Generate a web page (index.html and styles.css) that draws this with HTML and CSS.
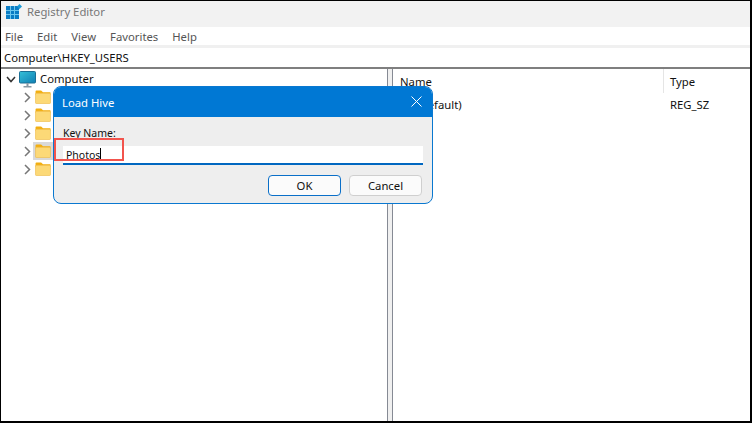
FILE: index.html
```html
<!DOCTYPE html>
<html lang="en">
<head>
<meta charset="utf-8">
<title>Registry Editor</title>
<link rel="stylesheet" href="styles.css">
</head>
<body>
<div class="window">
  <header class="titlebar">
    <svg class="app-icon" width="16" height="15" viewBox="0 0 16 15">
      <rect x="0" y="2" width="13" height="13" fill="#0a7cc4"/>
      <path d="M0 6.500h13M0 10.500h13M4.500 2v13M8.500 2v13" stroke="#6cc7ee" stroke-width="1"/>
      <path d="M11 2.500 L13.500 0 L16 2.500 L13.500 5 Z" fill="#1a9ad6"/>
    </svg>
    <span class="title-text">Registry Editor</span>
  </header>
  <nav class="menubar">
    <span>File</span><span>Edit</span><span>View</span><span>Favorites</span><span>Help</span>
  </nav>
  <div class="menu-gap"></div>
  <div class="address">Computer\HKEY_USERS</div>
  <main class="panes">
    <section class="tree">
      <div class="tree-root">
        <svg class="chev-down" width="10" height="7" viewBox="0 0 10 7"><path d="M1 1 L5 5.500 L9 1" fill="none" stroke="#333" stroke-width="1.500"/></svg>
        <svg class="monitor" width="17" height="17" viewBox="0 0 17 17">
          <defs><linearGradient id="scr" x1="0" y1="0" x2="1" y2="1"><stop offset="0" stop-color="#35c0d8"/><stop offset="1" stop-color="#0f7fb4"/></linearGradient></defs>
          <rect x="0.500" y="0.500" width="16" height="11.500" rx="1" fill="url(#scr)" stroke="#1b6f95"/>
          <rect x="7.500" y="12" width="2" height="3" fill="#8a9aa5"/>
          <rect x="4.500" y="15" width="8" height="1.500" fill="#8a9aa5"/>
        </svg>
        <span>Computer</span>
      </div>
      <ul class="tree-list">
        <li class="tree-row"><svg class="chev" width="7" height="11" viewBox="0 0 7 11"><path d="M1 1 L5.500 5.500 L1 10" fill="none" stroke="#777" stroke-width="1.500"/></svg><svg class="folder" width="16" height="14" viewBox="0 0 17 15"><use href="#fld"/></svg></li>
        <li class="tree-row"><svg class="chev" width="7" height="11" viewBox="0 0 7 11"><path d="M1 1 L5.500 5.500 L1 10" fill="none" stroke="#777" stroke-width="1.500"/></svg><svg class="folder" width="16" height="14" viewBox="0 0 17 15"><use href="#fld"/></svg></li>
        <li class="tree-row"><svg class="chev" width="7" height="11" viewBox="0 0 7 11"><path d="M1 1 L5.500 5.500 L1 10" fill="none" stroke="#777" stroke-width="1.500"/></svg><svg class="folder" width="16" height="14" viewBox="0 0 17 15"><use href="#fld"/></svg></li>
        <li class="tree-row selected"><svg class="chev" width="7" height="11" viewBox="0 0 7 11"><path d="M1 1 L5.500 5.500 L1 10" fill="none" stroke="#777" stroke-width="1.500"/></svg><span class="sel-box"><svg class="folder" width="16" height="14" viewBox="0 0 17 15"><use href="#fld"/></svg></span></li>
        <li class="tree-row"><svg class="chev" width="7" height="11" viewBox="0 0 7 11"><path d="M1 1 L5.500 5.500 L1 10" fill="none" stroke="#777" stroke-width="1.500"/></svg><svg class="folder" width="16" height="14" viewBox="0 0 17 15"><use href="#fld"/></svg></li>
      </ul>
    </section>
    <div class="splitter"></div>
    <section class="list">
      <div class="list-head">
        <span class="col-name">Name</span>
        <span class="col-type">Type</span>
      </div>
      <div class="list-row">
        <span class="col-name col-default">(Default)</span>
        <span class="col-type-val">REG_SZ</span>
      </div>
    </section>
  </main>
  <div class="dialog">
    <div class="dialog-head">
      <span>Load Hive</span>
      <svg class="close" width="11" height="11" viewBox="0 0 11 11"><path d="M0.500 0.500 L10.500 10.500 M10.500 0.500 L0.500 10.500" stroke="#fff" stroke-width="1"/></svg>
    </div>
    <div class="dialog-body">
      <label class="key-label">Key Name:</label>
      <div class="input">Photos<span class="caret"></span></div>
      <div class="buttons">
        <button class="btn primary">OK</button>
        <button class="btn">Cancel</button>
      </div>
    </div>
    <div class="highlight"></div>
  </div>
</div>
<svg class="defs" width="0" height="0">
  <defs>
    <g id="fld">
      <path d="M0.500 3 V1.500 Q0.500 0.500 1.500 0.500 H6.500 L8.500 2.500 H16.500 V5 H0.500 Z" fill="#f2ae0f"/>
      <rect x="0.500" y="3.500" width="16" height="11" rx="0.800" fill="#fcd977" stroke="#eebc4c" stroke-width="0.700"/>
    </g>
  </defs>
</svg>
</body>
</html>
```
FILE: styles.css
```css
* { box-sizing: border-box; }
html, body { margin: 0; padding: 0; background: #fff; }
body { width: 752px; height: 423px; overflow: hidden; font-family: "Noto Sans", "Open Sans", sans-serif; font-size: 11.300px; color: #111; }
ul { list-style: none; margin: 0; padding: 0; }
.defs { position: absolute; }
.window { position: relative; width: 752px; height: 423px; display: flex; flex-direction: column; border: 1px solid #000; border-width: 1px 2px 2px 1px; overflow: hidden; }
.titlebar { height: 26px; flex: none; background: #f2f2f2; display: flex; align-items: center; padding: 0 0 5px 5px; gap: 5px; color: #777; }
.title-text { font-size: 11.300px; }
.app-icon { flex: none; }
.menubar { height: 18px; flex: none; background: #fff; display: flex; align-items: center; padding-left: 4px; gap: 14px; color: #555; }
.menu-gap { height: 3px; flex: none; background: #f0f0f0; }
.address { height: 19px; flex: none; display: flex; align-items: center; padding-left: 3px; color: #111; }
.panes { flex: 1; display: flex; border-top: 2px solid #7f7f7f; min-height: 0; }
.tree { width: 386px; flex: none; padding: 1px 0 0 5px; }
.tree-root { display: flex; align-items: center; height: 18px; gap: 3px; }
.tree-root span { margin-left: 1px; margin-top: -1px; }
.tree-list { padding-left: 18px; }
.tree-row { height: 18px; display: flex; align-items: center; gap: 4px; }
.chev { flex: none; }
.sel-box { display: flex; align-items: center; justify-content: center; width: 20px; height: 18px; background: #d9d9d9; margin-left: -2px; }
.splitter { width: 6px; flex: none; background: #f0f0f0; border-left: 1px solid #868a94; border-right: 1px solid #868a94; }
.list { flex: 1; position: relative; }
.list-head { display: flex; height: 24px; align-items: center; }
.list-row { display: flex; height: 22px; align-items: center; }
.col-name { width: 270px; padding-left: 7px; flex: none; }
.col-default { padding-left: 23px; }
.col-type { border-left: 1px solid #e5e5e5; height: 24px; display: flex; align-items: center; padding-left: 6px; }
.col-type-val { padding-left: 7px; }
.dialog { position: absolute; left: 52px; top: 85px; width: 380px; height: 118px; border: 1px solid #0a78d0; border-radius: 8px; background: #eeeeee; overflow: hidden; display: flex; flex-direction: column; }
.dialog-head { height: 30px; flex: none; background: #0078d4; color: #fff; display: flex; align-items: center; justify-content: space-between; padding: 0 10px 0 8px; }
.close { margin-top: -2px; }
.dialog-body { flex: 1; padding: 9px 9px 0 9px; display: flex; flex-direction: column; }
.key-label { line-height: 14px; font-size: 10.500px; }
.input { height: 19px; margin-top: 6px; background: #fff; border-bottom: 2px solid #0067c0; padding-left: 3px; font-size: 10.500px; display: flex; align-items: center; }
.caret { width: 1px; height: 13px; background: #000; }
.buttons { display: flex; justify-content: flex-end; gap: 8px; margin-top: 10px; margin-right: 1px; }
.btn { width: 73px; height: 21px; padding: 0; font: inherit; color: #111; background: #fbfbfb; border: 1px solid #cfcfcf; border-radius: 4px; }
.btn.primary { border-color: #0a6fc8; }
.highlight { position: absolute; left: 0; top: 51px; width: 70px; height: 23px; border: 2px solid #f2544d; }
```
